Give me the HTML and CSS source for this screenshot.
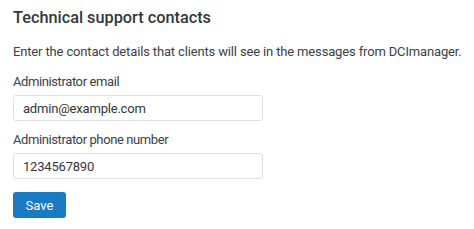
FILE: index.html
```html
<!DOCTYPE html>
<html lang="en">
<head>
    <meta charset="UTF-8">
    <title>Technical support contacts</title>
    <link rel="stylesheet" href="styles.css">
</head>
<body>
    <div class="panel">
        <h2 class="title">Technical support contacts</h2>
        <p class="hint">Enter the contact details that clients will see in the messages from DCImanager.</p>

        <div class="field">
            <label class="label" for="email">Administrator email</label>
            <input class="input" type="text" id="email" value="admin@example.com">
        </div>

        <div class="field">
            <label class="label" for="phone">Administrator phone number</label>
            <input class="input" type="text" id="phone" value="1234567890">
        </div>

        <button class="button">Save</button>
    </div>
</body>
</html>
```

FILE: styles.css
```css
body {
    margin: 0;
    background-color: #fff;
    font-family: Roboto, 'Noto Sans', sans-serif;
    color: #3a4149;
}

.panel {
    padding: 6px 13px;
}

.title {
    margin: 0;
    font-size: 16.3px;
    font-weight: 500;
    line-height: 24px;
    color: #2f3740;
}

.hint {
    margin: 12px 0 0;
    font-size: 13px;
    line-height: 20px;
    letter-spacing: -0.15px;
    white-space: nowrap;
}

.field {
    margin-top: 10px;
}

.field + .field {
    margin-top: 9px;
}

.label {
    display: block;
    font-size: 13px;
    line-height: 20px;
    letter-spacing: -0.4px;
    margin-bottom: 3px;
}

.input {
    display: block;
    box-sizing: border-box;
    width: 250px;
    height: 26px;
    padding: 0 9px;
    border: 1px solid #dcdfe3;
    border-radius: 3px;
    font-family: inherit;
    font-size: 13px;
    letter-spacing: -0.2px;
    color: #2f3740;
}

.button {
    display: block;
    margin-top: 13px;
    width: 53px;
    height: 26px;
    padding: 0;
    border: none;
    border-radius: 3px;
    background-color: #1a7ac4;
    color: #fff;
    font-family: inherit;
    font-size: 13px;
}
```
